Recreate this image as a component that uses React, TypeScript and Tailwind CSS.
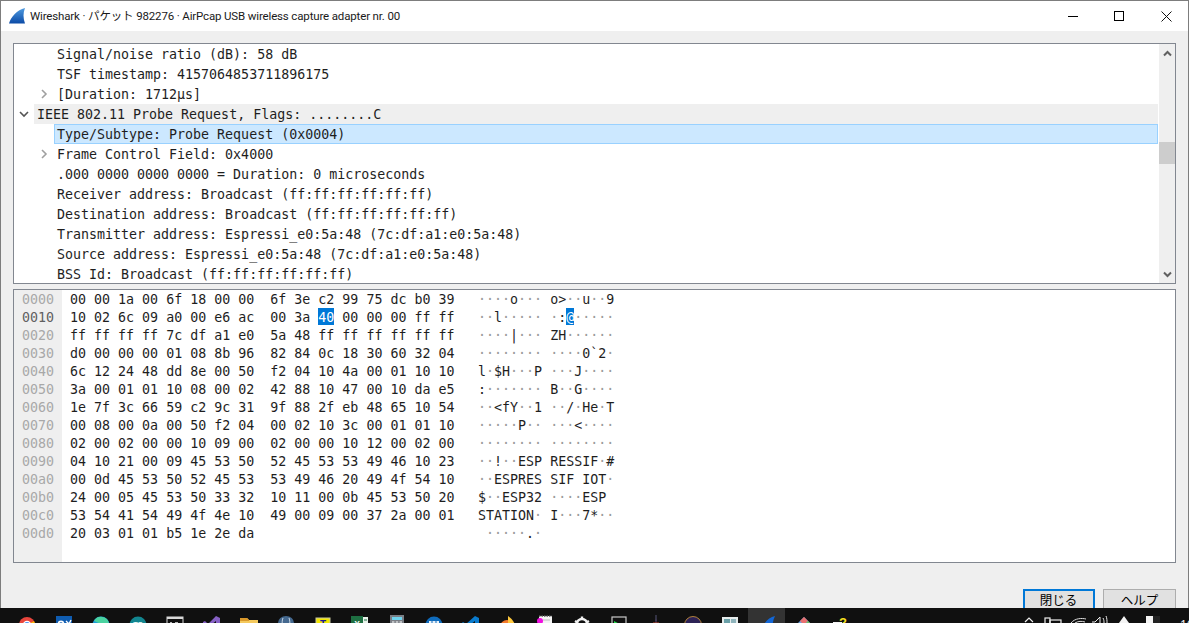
import React from "react";

const MONO = "font-['DejaVu_Sans_Mono','Liberation_Mono',monospace] text-[13.3px] leading-[20px] whitespace-pre text-[#1e1e1e]";

const HEX = [
  "00 00 1a 00 6f 18 00 00 6f 3e c2 99 75 dc b0 39",
  "10 02 6c 09 a0 00 e6 ac 00 3a 40 00 00 00 ff ff",
  "ff ff ff ff 7c df a1 e0 5a 48 ff ff ff ff ff ff",
  "d0 00 00 00 01 08 8b 96 82 84 0c 18 30 60 32 04",
  "6c 12 24 48 dd 8e 00 50 f2 04 10 4a 00 01 10 10",
  "3a 00 01 01 10 08 00 02 42 88 10 47 00 10 da e5",
  "1e 7f 3c 66 59 c2 9c 31 9f 88 2f eb 48 65 10 54",
  "00 08 00 0a 00 50 f2 04 00 02 10 3c 00 01 01 10",
  "02 00 02 00 00 10 09 00 02 00 00 10 12 00 02 00",
  "04 10 21 00 09 45 53 50 52 45 53 53 49 46 10 23",
  "00 0d 45 53 50 52 45 53 53 49 46 20 49 4f 54 10",
  "24 00 05 45 53 50 33 32 10 11 00 0b 45 53 50 20",
  "53 54 41 54 49 4f 4e 10 49 00 09 00 37 2a 00 01",
  "20 03 01 01 b5 1e 2e da",
];

function Chevron({ open }: { open?: boolean }) {
  return (
    <svg width="10" height="10" viewBox="0 0 10 10" fill="none" stroke={open ? "#555" : "#a0a0a0"} strokeWidth="1.6">
      {open ? <path d="M1 3 L5 7 L9 3" /> : <path d="M3 1 L7 5 L3 9" />}
    </svg>
  );
}

function Row({ text, depth, chevron, open, variant }: { text: string; depth: 0 | 1; chevron?: boolean; open?: boolean; variant?: "head" | "sel" }) {
  const bg = variant === "head" ? "bg-[#efefef]" : variant === "sel" ? "bg-[#cce8ff] border border-[#99d1ff]" : "";
  const pad = variant === "sel" ? "pl-[2px] leading-[20px]" : "pl-[3px] leading-[22px]";
  return (
    <div className="flex h-5 shrink-0 mr-px">
      {depth === 1 && <div className="w-5 shrink-0" />}
      <div className="w-5 shrink-0 flex items-center justify-center">{chevron && <Chevron open={open} />}</div>
      <div className={`flex-1 min-w-0 ${bg} ${pad} font-['DejaVu_Sans_Mono','Liberation_Mono',monospace] text-[13.3px] whitespace-pre text-[#1e1e1e]`}>{text}</div>
    </div>
  );
}

function HexRow({ hex, idx }: { hex: string; idx: number }) {
  const bytes = hex.split(" ");
  const offset = (idx * 16).toString(16).padStart(4, "0");
  const active = idx === 1;
  return (
    <div className={`flex h-[18px] ${MONO}`}>
      <div className={`w-12 shrink-0 bg-[#efefef] pl-2 ${active ? "text-[#606060]" : "text-[#a8a8a8]"}`}>{offset}</div>
      <div className="w-[416px] shrink-0 pl-2">
        {bytes.map((b, i) => (
          <React.Fragment key={i}>
            {active && i === 10 ? <span className="inline-block h-[17px] leading-[19px] bg-[#0078d7] text-white">{b}</span> : b}
            {i === 7 ? "  " : i < 15 ? " " : ""}
          </React.Fragment>
        ))}
      </div>
      <div>
        {bytes.map((b, i) => {
          const n = parseInt(b, 16);
          const printable = n >= 32 && n < 127;
          const ch = printable ? String.fromCharCode(n) : "·";
          return (
            <React.Fragment key={i}>
              {active && i === 10 ? (
                <span className="inline-block h-[17px] leading-[19px] bg-[#0078d7] text-white">{ch}</span>
              ) : (
                <span className={printable ? "" : "text-[#9a9a9a]"}>{ch}</span>
              )}
              {i === 7 ? " " : ""}
            </React.Fragment>
          );
        })}
      </div>
    </div>
  );
}

const icons: React.ReactNode[] = [
  <g key="chrome"><circle cx="10" cy="10" r="8" fill="#e8453c" /><path d="M10 10 L3 14 A8 8 0 0 0 14 17 Z" fill="#2da94f" /><path d="M10 10 L17 6 A8 8 0 0 1 14 17 Z" fill="#fbbc05" /><circle cx="10" cy="10" r="3.6" fill="#4a8df0" stroke="#fff" strokeWidth="1.2" /></g>,
  <g key="outlook"><rect x="2" y="1" width="16" height="18" fill="#0f5cb0" /><circle cx="7" cy="9" r="2.6" fill="none" stroke="#fff" strokeWidth="1.6" /><path d="M12 6 L15 9 L17 5" stroke="#fff" strokeWidth="1.4" fill="none" /></g>,
  <g key="edge"><circle cx="10" cy="10" r="8.5" fill="#1c9ed8" /><path d="M3 6 A8 8 0 0 1 18 9 L10 9 Z" fill="#4bd3a0" /><circle cx="9" cy="11" r="3" fill="#0f5fb0" /></g>,
  <g key="ts"><circle cx="10" cy="10" r="8.5" fill="#12858f" /><text x="10" y="12" fontSize="7.5" fontWeight="700" fill="#e8f8f8" textAnchor="middle" fontFamily="Liberation Sans">TS</text></g>,
  <g key="term"><rect x="2" y="2" width="16" height="16" fill="#101010" stroke="#d8d8d8" strokeWidth="1" /><rect x="2" y="2" width="16" height="2" fill="#d8d8d8" /><path d="M5 8 h2 M10 8 h3" stroke="#e8e8e8" strokeWidth="1.4" /></g>,
  <g key="vs"><path d="M14 1 L18 3 V17 L14 19 L6 11 L3 14 L1 13 V7 L3 6 L6 9 Z" fill="#8661c5" /><path d="M14 6 V14 L9 10 Z" fill="#101010" /></g>,
  <g key="folder"><path d="M1 3 H8 L10 5 H19 V18 H1 Z" fill="#f4c95d" /><path d="M1 3 H8 L10 5 V6 H1 Z" fill="#d9982b" /></g>,
  <g key="pg"><ellipse cx="10" cy="8" rx="8" ry="7" fill="#44688e" /><path d="M7 3 C5 8 7 14 8 14 M13 3 C15 8 13 14 12 14" stroke="#c8d6e4" strokeWidth="1" fill="none" /></g>,
  <g key="t"><rect x="3" y="3" width="14" height="15" fill="#f2e600" stroke="#c8c8a0" strokeWidth="1" /><text x="10" y="13" fontSize="10" fontWeight="700" fill="#1a1a9a" textAnchor="middle" fontFamily="Liberation Sans">T</text></g>,
  <g key="xl"><rect x="8" y="2" width="10" height="16" fill="#e8f1ea" /><rect x="1" y="1" width="12" height="18" fill="#1e6f42" /><text x="7" y="12" fontSize="8.5" fontWeight="700" fill="#fff" textAnchor="middle" fontFamily="Liberation Sans">X</text><path d="M14 5 h3 M14 9 h3" stroke="#1e6f42" /></g>,
  <g key="calc"><rect x="3" y="0" width="14" height="20" fill="#7b7f86" /><rect x="5" y="2" width="10" height="3" fill="#6fd4ef" /><path d="M5 7 h10" stroke="#d4d6d8" strokeWidth="1.4" strokeDasharray="2.4 1.4" /></g>,
  <g key="circ"><circle cx="10" cy="10" r="8.5" fill="#0f6cbd" /><rect x="5" y="6" width="10" height="9" fill="#e8f0f8" /><path d="M8 6 v9 M12 6 v9" stroke="#0f6cbd" /></g>,
  <g key="vsc"><path d="M14 1 L18 3 V17 L14 19 L5 11 L2 13 L1 12 V8 L2 7 L5 9 Z" fill="#0a7bcd" /><path d="M14 6 V14 L9 10 Z" fill="#101010" /></g>,
  <g key="ff"><circle cx="9" cy="12" r="7" fill="#f4792b" /><path d="M10 1 C14 4 18 8 17 14 L10 12 Z" fill="#ffc83d" /><circle cx="9" cy="11" r="3" fill="#9b4dd0" /></g>,
  <g key="np"><rect x="4" y="1" width="13" height="18" fill="#f4f4f4" /><path d="M4 1 h13" stroke="#555" strokeDasharray="1.5 1" strokeWidth="1.5" /><path d="M8 5 h7 M8 9 h7" stroke="#bbb" /><circle cx="5" cy="6" r="3" fill="#f010e0" /></g>,
  <g key="gear"><circle cx="10" cy="9" r="5" fill="none" stroke="#f2f2f2" strokeWidth="2.6" /><path d="M10 1.5 v3 M3 6 l2.5 1.5 M17 6 l-2.5 1.5" stroke="#f2f2f2" strokeWidth="2.4" /></g>,
  <g key="green"><rect x="3" y="2" width="14" height="16" fill="none" stroke="#c8c8c8" strokeWidth="1.2" /><path d="M5 6 L16 12 L5 14 Z" fill="#22d84a" /></g>,
  <g key="prism"><path d="M10 3 L13 16 L7 16 Z" fill="#3a2a4a" /><path d="M10 0 V6" stroke="#557" /><path d="M7 8 h6" stroke="#c04a30" /><path d="M8 11 h4" stroke="#3a6ac0" /></g>,
  <g key="eclipse"><circle cx="10" cy="10" r="8.5" fill="#2c2255" stroke="#d49a3a" strokeWidth="0.8" /><rect x="2" y="8" width="16" height="2" fill="#e8e8f0" /></g>,
  <g key="win"><rect x="2" y="2" width="16" height="16" fill="#e6ecec" /><rect x="4" y="4" width="6" height="6" fill="#6aa0a8" /><rect x="11" y="4" width="5" height="12" fill="#8fb4bc" /></g>,
  <g key="shark"><path d="M4 19 C5 10 10 3 18 1 C15 7 15 13 17 19 Z" fill="#1367d6" /></g>,
  <g key="pal"><path d="M10 2 L18 10 L10 18 L2 10 Z" fill="#6aa0e0" /><path d="M10 2 L14 6 L10 10 L6 6 Z" fill="#e87070" /><path d="M14 6 L18 10 L14 14 L10 10 Z" fill="#6ac060" /></g>,
  <g key="q"><rect x="2" y="7" width="9" height="10" fill="#f4f4f4" /><text x="12" y="12" fontSize="13" fontWeight="700" fill="#f8e020" textAnchor="middle" fontFamily="Liberation Sans">?</text></g>,
];

function Taskbar() {
  return (
    <div className="h-[15px] shrink-0 bg-[#101010] flex overflow-hidden pl-2">
      {icons.map((ic, i) => (
        <div key={i} className={`w-[37px] shrink-0 h-[15px] flex justify-center pt-[7px] ${i === 20 ? "bg-[#333333]" : ""}`}>
          <svg width="20" height="20" viewBox="0 0 20 20" className="shrink-0">{ic}</svg>
        </div>
      ))}
      <div className="ml-auto flex shrink-0 text-[#f0f0f0]">
        <svg width="14" height="15" viewBox="0 0 14 15" fill="none" stroke="#eee" strokeWidth="1.2"><path d="M3 14 L7 10 L11 14" /></svg>
        <svg width="22" height="15" viewBox="0 0 22 15" fill="none" stroke="#eee" strokeWidth="1.2" className="ml-[6px]"><rect x="3" y="10" width="5" height="6" /><rect x="8" y="12" width="11" height="6" /></svg>
        <svg width="18" height="15" viewBox="0 0 18 15" fill="none" stroke="#ddd" className="ml-[6px]"><path d="M1 15 C5 10 12 10 16 11" /><path d="M5 15 C8 13 12 13 15 14" /></svg>
        <svg width="20" height="15" viewBox="0 0 20 15" fill="none" stroke="#eee" className="ml-[2px]"><path d="M2 14 H5 L10 9 V15" /><path d="M13 10 C14 12 14 13 14 15 M16 8 C17 10 17 13 17 15" /></svg>
        <svg width="14" height="15" viewBox="0 0 14 15" fill="#f4f4f4" className="ml-[7px]"><path d="M7 8 L12 15 H2 Z" /></svg>
        <svg width="16" height="15" viewBox="0 0 16 15" className="ml-[14px]"><rect x="1" y="8" width="14" height="8" fill="#f4f4f4" /><path d="M8 8 h7 v8 h-7 Z" fill="#222" /></svg>
        <span className="font-['Noto_Sans',sans-serif] text-[12px] leading-[15px] pt-[9px] ml-[19px] w-[9px] overflow-hidden">16</span>
      </div>
    </div>
  );
}

function Arrow({ down }: { down?: boolean }) {
  return (
    <div className="h-[18px] flex items-center justify-center shrink-0">
      <svg width="9" height="7" viewBox="0 0 9 7" fill="none" stroke="#606060" strokeWidth="2">
        {down ? <path d="M1 1.5 L4.5 5 L8 1.5" /> : <path d="M1 5.5 L4.5 2 L8 5.5" />}
      </svg>
    </div>
  );
}

export default function App() {
  return (
    <div className="w-[1189px] h-[623px] overflow-hidden flex flex-col bg-[#1a3a6a]">
      <div className="flex-1 min-h-0 flex flex-col bg-[#efefef] border-l border-t border-r border-[#7d7d7d]">
        <div className="h-[30px] shrink-0 bg-white flex items-center">
          <svg width="17" height="16" viewBox="0 0 17 16" className="ml-[8px]">
            <defs><linearGradient id="sh" x1="0" y1="0" x2="0" y2="1"><stop offset="0" stopColor="#4f9be0" /><stop offset="1" stopColor="#0b4aa6" /></linearGradient></defs>
            <path d="M0 15.5 C2 9 8 2 16 0 C14 5 14 10 16 15.5 Z" fill="url(#sh)" />
          </svg>
          <span className="ml-[4px] mt-px font-['Roboto','Noto_Sans_CJK_JP',sans-serif] text-[11.5px] tracking-[-0.15px] text-[#1a1a1a] whitespace-pre">Wireshark · パケット 982276 · AirPcap USB wireless capture adapter nr. 00</span>
          <div className="ml-auto flex h-full items-center shrink-0">
            <div className="w-[46px] flex justify-center"><div className="w-[10px] h-px bg-black" /></div>
            <div className="w-[46px] flex justify-center mr-px"><div className="w-[10px] h-[10px] border border-black" /></div>
            <div className="w-[46px] flex justify-center mr-[-1px]">
              <svg width="11" height="11" viewBox="0 0 11 11" stroke="#111" strokeWidth="1"><path d="M0.5 0.5 L10.5 10.5 M10.5 0.5 L0.5 10.5" /></svg>
            </div>
          </div>
        </div>

        <div className="flex-1 min-h-0 flex flex-col pl-3 pr-3 pt-3">
          <div className="h-[241px] shrink-0 border border-[#828790] bg-white flex overflow-hidden">
            <div className="flex-1 min-w-0 flex flex-col">
              <Row depth={1} text="Signal/noise ratio (dB): 58 dB" />
              <Row depth={1} text="TSF timestamp: 4157064853711896175" />
              <Row depth={1} chevron text="[Duration: 1712µs]" />
              <Row depth={0} chevron open variant="head" text="IEEE 802.11 Probe Request, Flags: ........C" />
              <Row depth={1} variant="sel" text="Type/Subtype: Probe Request (0x0004)" />
              <Row depth={1} chevron text="Frame Control Field: 0x4000" />
              <Row depth={1} text=".000 0000 0000 0000 = Duration: 0 microseconds" />
              <Row depth={1} text="Receiver address: Broadcast (ff:ff:ff:ff:ff:ff)" />
              <Row depth={1} text="Destination address: Broadcast (ff:ff:ff:ff:ff:ff)" />
              <Row depth={1} text="Transmitter address: Espressi_e0:5a:48 (7c:df:a1:e0:5a:48)" />
              <Row depth={1} text="Source address: Espressi_e0:5a:48 (7c:df:a1:e0:5a:48)" />
              <Row depth={1} text="BSS Id: Broadcast (ff:ff:ff:ff:ff:ff)" />
            </div>
            <div className="w-[16px] shrink-0 bg-[#efefef] flex flex-col">
              <Arrow />
              <div className="flex-1 min-h-0">
                <div className="h-[22px] bg-[#cdcdcd] mt-[80px]" />
              </div>
              <Arrow down />
            </div>
          </div>

          <div className="h-[274px] shrink-0 mt-[5px] border border-[#828790] bg-white flex flex-col overflow-hidden">
            {HEX.map((h, i) => <HexRow key={i} hex={h} idx={i} />)}
            <div className="flex-1 min-h-0"><div className="w-12 h-full bg-[#efefef]" /></div>
          </div>

          <div className="mt-auto flex justify-end gap-2 h-[19px] overflow-hidden font-['Noto_Sans_CJK_JP',sans-serif] text-[12.5px] text-black">
            <div className="w-[72px] h-[23px] shrink-0 border-2 border-[#0078d7] bg-[#e1e1e1] text-center leading-[18px] pr-px">閉じる</div>
            <div className="w-[73px] h-[23px] shrink-0 border border-[#adadad] bg-[#e1e1e1] text-center leading-[19px]">ヘルプ</div>
          </div>
        </div>
      </div>
      <Taskbar />
    </div>
  );
}
